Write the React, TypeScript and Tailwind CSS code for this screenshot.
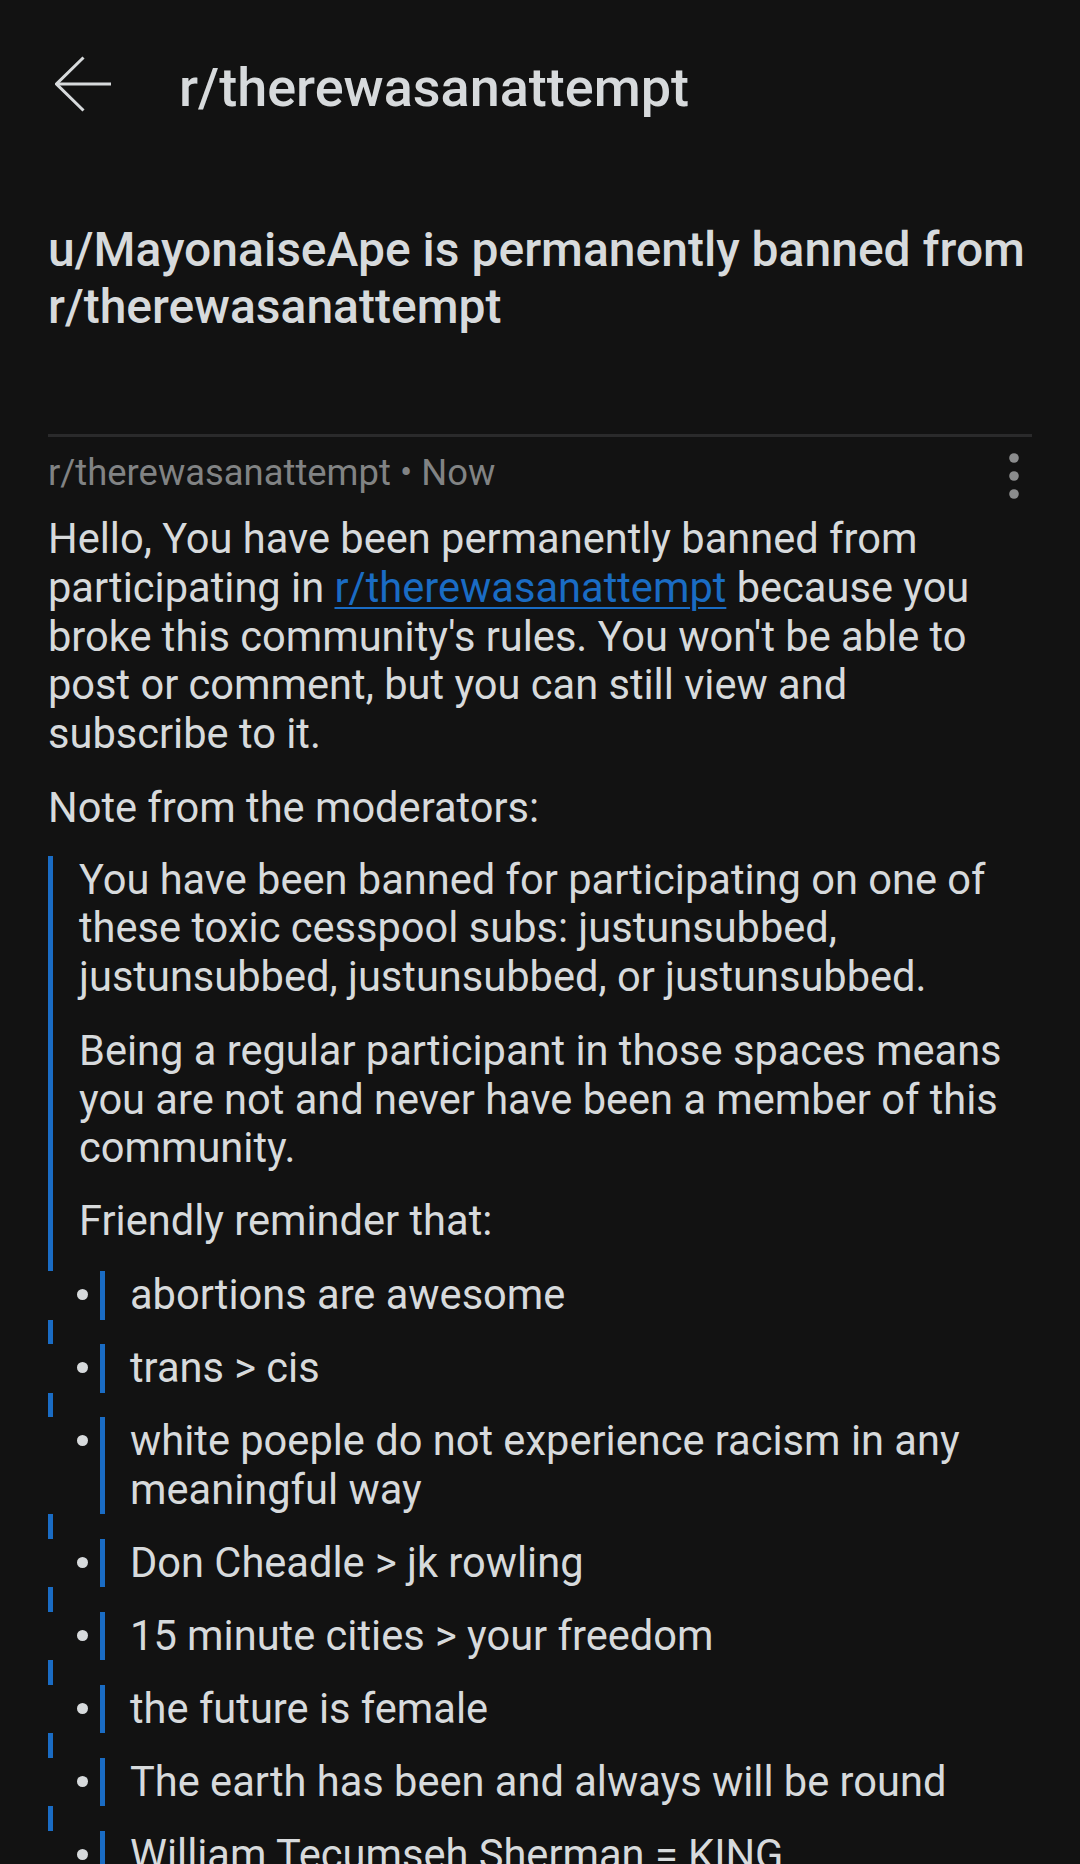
import { Fragment } from 'react';

const items = [
  'abortions are awesome',
  'trans > cis',
  'white poeple do not experience racism in any meaningful way',
  'Don Cheadle > jk rowling',
  '15 minute cities > your freedom',
  'the future is female',
  'The earth has been and always will be round',
  'William Tecumseh Sherman = KING',
];

function BackArrow() {
  return (
    <svg width="56" height="56" viewBox="0 0 56 56" fill="none" stroke="#d7dadc" strokeWidth="3" strokeLinecap="butt">
      <path d="M28.5 1.5 L1.5 28 L28.5 54.5" />
      <path d="M2 28 H56" />
    </svg>
  );
}

function MoreDots() {
  return (
    <svg width="18" height="46" viewBox="0 0 18 46" fill="#8b8c8d">
      <circle cx="9" cy="5" r="4.8" />
      <circle cx="9" cy="23" r="4.8" />
      <circle cx="9" cy="41" r="4.8" />
    </svg>
  );
}

export default function App() {
  return (
    <div className="h-[1864px] w-[1080px] overflow-hidden bg-[#121212] text-[#d7dadc] font-['Roboto',sans-serif]">
      {/* Top bar */}
      <header className="flex items-start pl-[55px] pt-[56px]">
        <BackArrow />
        <h1 className="ml-[68px] mt-[4px] text-[54px] leading-[56px] font-medium">r/therewasanattempt</h1>
      </header>

      <main className="mx-[48px]">
        {/* Title */}
        <h2 className="-mr-[24px] mt-[105px] text-[48px] leading-[57px] font-medium">
          u/MayonaiseApe is permanently banned from r/therewasanattempt
        </h2>

        <div className="mt-[99px] h-[3px] bg-[#2a2a2b]" />

        {/* Meta row */}
        <div className="mt-[16px] flex items-start justify-between">
          <p className="text-[36.4px] leading-[40px] text-[#818384]">r/therewasanattempt • Now</p>
          <button className="mr-[9px]">
            <MoreDots />
          </button>
        </div>

        {/* Message body */}
        <div className="mt-[16px] text-[41.6px] leading-[48.75px]">
          <p>
            Hello, You have been permanently banned from participating in{' '}
            <a className="text-[#1a6cc4] underline decoration-2 underline-offset-[5px]">r/therewasanattempt</a>{' '}
            because you broke this community's rules. You won't be able to post or comment, but you can still view and
            subscribe to it.
          </p>
          <p className="mt-[25px]">Note from the moderators:</p>

          <blockquote className="mt-[23px] border-l-[5px] border-[#1a6cc4] pl-[26px]">
            <p>
              You have been banned for participating on one of these toxic cesspool subs: justunsubbed, justunsubbed,
              justunsubbed, or justunsubbed.
            </p>
            <p className="mt-[25px]">
              Being a regular participant in those spaces means you are not and never have been a member of this
              community.
            </p>
            <p className="mt-[24px]">Friendly reminder that:</p>

            <ul className="mt-[25px] flex flex-col gap-[24.25px]">
              {items.map((text) => (
                <Fragment key={text}>
                  <li className="-ml-[31px] flex bg-[#121212]">
                    <span className="ml-[29px] mt-[18px] h-[11px] w-[11px] shrink-0 rounded-full bg-[#d7dadc]" />
                    <span className="ml-[12px] w-[5px] shrink-0 bg-[#1a6cc4]" />
                    <span className="pl-[25px]">{text}</span>
                  </li>
                </Fragment>
              ))}
            </ul>
          </blockquote>
        </div>
      </main>
    </div>
  );
}
